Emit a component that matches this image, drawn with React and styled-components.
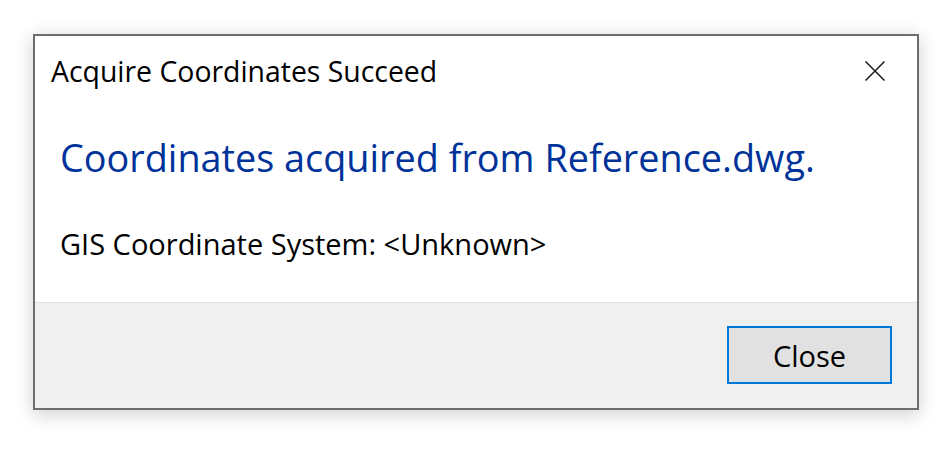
import React from "react"
import styled, { createGlobalStyle } from "styled-components"

const GlobalStyle = createGlobalStyle`
  html, body {
    margin: 0;
    padding: 0;
    background: #ffffff;
  }
  body {
    font-family: "Open Sans", "Noto Sans", sans-serif;
  }
`

const Page = styled.div`
  width: 951px;
  height: 449px;
  padding: 34px 0 0 33px;
  box-sizing: border-box;
`

const Dialog = styled.div`
  width: 886px;
  height: 376px;
  box-sizing: border-box;
  border: 2px solid #6e6e6e;
  background: #ffffff;
  box-shadow: 0 4px 18px rgba(0, 0, 0, 0.2);
  display: flex;
  flex-direction: column;
`

const TitleBar = styled.div`
  display: flex;
  align-items: center;
  justify-content: space-between;
  height: 70px;
  flex-shrink: 0;
  padding: 0 32px 0 16px;
`

const Title = styled.div`
  font-size: 28.4px;
  line-height: 1;
  color: #000000;
`

const CloseIcon = styled.button`
  width: 20px;
  height: 20px;
  border: none;
  background: none;
  padding: 0;
  display: flex;
  align-items: center;
  justify-content: center;
`

const Body = styled.div`
  flex: 1;
  display: flex;
  flex-direction: column;
  padding: 0 0 0 25px;
`

const Heading = styled.div`
  font-size: 37.8px;
  line-height: 1;
  color: #003399;
  margin-top: 33px;
`

const Info = styled.div`
  font-size: 29px;
  line-height: 1;
  color: #000000;
  margin-top: 52px;
`

const Footer = styled.div`
  height: 106px;
  flex-shrink: 0;
  box-sizing: border-box;
  background: #f0f0f0;
  border-top: 1px solid #dfdfdf;
  display: flex;
  align-items: flex-start;
  justify-content: flex-end;
  padding: 23px 25px 0 0;
`

const Button = styled.button`
  width: 165px;
  height: 58px;
  box-sizing: border-box;
  border: 2px solid #0078d7;
  background: #e1e1e1;
  font-family: "Open Sans", "Noto Sans", sans-serif;
  font-size: 29px;
  line-height: 1;
  color: #000000;
  padding: 0;
`

export default function App() {
  return (
    <>
      <GlobalStyle />
      <Page>
        <Dialog>
          <TitleBar>
            <Title>Acquire Coordinates Succeed</Title>
            <CloseIcon aria-label="Close">
              <svg width="20" height="20" viewBox="0 0 20 20">
                <path d="M0.5 0.5 L19.5 19.5 M19.5 0.5 L0.5 19.5" stroke="#1a1a1a" strokeWidth="1.5" fill="none" />
              </svg>
            </CloseIcon>
          </TitleBar>
          <Body>
            <Heading>Coordinates acquired from Reference.dwg.</Heading>
            <Info>GIS Coordinate System: &lt;Unknown&gt;</Info>
          </Body>
          <Footer>
            <Button>Close</Button>
          </Footer>
        </Dialog>
      </Page>
    </>
  )
}
